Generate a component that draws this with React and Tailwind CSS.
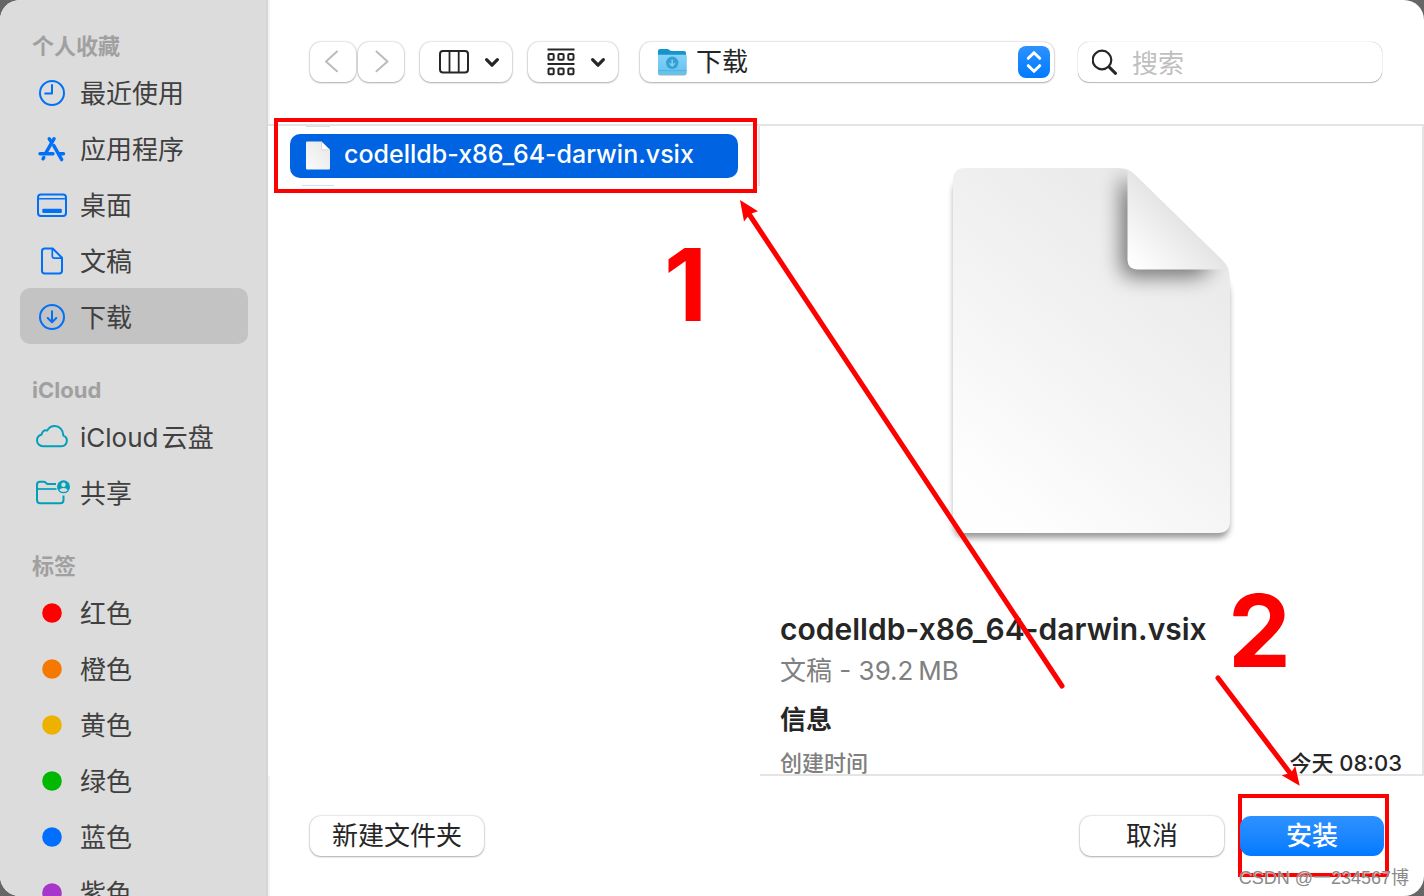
import React from 'react';

const blue = '#0070f8';
const teal = '#00a0b8';

function ClockIcon() {
  return (
    <svg width="32" height="32" viewBox="0 0 32 32" fill="none" stroke={blue} strokeWidth="2">
      <circle cx="16" cy="16" r="12" />
      <path d="M16 8v8.4H9.2" strokeLinecap="round" strokeLinejoin="round" />
    </svg>
  );
}

function AppsIcon() {
  return (
    <svg width="32" height="32" viewBox="0 0 32 32" fill="none" stroke={blue} strokeWidth="3.4" strokeLinecap="round">
      <path d="M18.1 5.7 10 19.6M7.8 24.5l-.8 1.3" />
      <path d="M13.2 5.7l2.4 3.6" />
      <path d="M17.8 12.6l7.9 14" />
      <path d="M4 20.7h13M23.4 20.7H27.500" />
    </svg>
  );
}

function DesktopIcon() {
  return (
    <svg width="32" height="32" viewBox="0 0 32 32" fill="none" stroke={blue} strokeWidth="2">
      <rect x="2" y="5.500" width="28" height="21.500" rx="3" />
      <path d="M2 9.700h28" strokeWidth="1.600" />
      <rect x="6.300" y="19.800" width="19.500" height="4.200" rx="1" fill={blue} stroke="none" />
    </svg>
  );
}

function DocumentIcon() {
  return (
    <svg width="32" height="32" viewBox="0 0 32 32" fill="none" stroke={blue} strokeWidth="2" strokeLinejoin="round">
      <path d="M16.700 3.500H8.700Q6 3.500 6 6.200V25.800Q6 28.500 8.700 28.500H23.300Q26 28.500 26 25.800V12.700Z" />
      <path d="M16.300 3.800V11.100Q16.300 13.200 18.400 13.200H25.800" strokeWidth="1.700" />
    </svg>
  );
}

function DownloadIcon() {
  return (
    <svg width="32" height="32" viewBox="0 0 32 32" fill="none" stroke={blue} strokeWidth="2" strokeLinecap="round" strokeLinejoin="round">
      <circle cx="16" cy="16" r="12" />
      <path d="M16 10.200V21M11.700 17l4.300 4.300 4.300-4.300" />
    </svg>
  );
}

function CloudIcon() {
  return (
    <svg width="36" height="32" viewBox="0 1 36 32" fill="none" stroke={teal} strokeWidth="2" strokeLinejoin="round">
      <path d="M9 26.200H27.500A5.500 5.500 0 0 0 29.400 15.600C29.200 9.800 25.300 6 20.800 6C17.300 6 14.600 7.900 13.200 10.600C10 9.600 7.900 11.800 7.700 14.500C4.700 15.400 3 17.600 3 20.300C3 23.600 5.600 26.200 9 26.200Z" />
    </svg>
  );
}

function SharedFolderIcon() {
  return (
    <svg width="36" height="32" viewBox="0 1 36 32" fill="none" stroke={teal} strokeWidth="2" strokeLinejoin="round">
      <path d="M29.500 19.500V24Q29.500 27.200 26.300 27.200H6.200Q3 27.200 3 24V8.700Q3 5.800 5.900 5.800H9.500Q10.800 5.800 11.800 6.700L12.600 7.400Q13.300 8 14.500 8H22" />
      <path d="M3 13h19.500" strokeWidth="1.700" />
      <circle cx="29.500" cy="10.800" r="6.500" fill={teal} stroke="none" />
      <circle cx="29.500" cy="8.700" r="2.200" fill="#dcdcdc" stroke="none" />
      <path d="M25.300 14.300Q26.200 11.900 29.500 11.900T33.700 14.300Q32.200 16 29.500 16T25.300 14.300Z" fill="#dcdcdc" stroke="none" />
    </svg>
  );
}

function Dot({ color }) {
  return (
    <svg width="32" height="32" viewBox="0 0 32 32">
      <circle cx="16" cy="16" r="9.800" fill={color} />
    </svg>
  );
}

const sections = [
  {
    title: '个人收藏',
    items: [
      { label: '最近使用', icon: <ClockIcon /> },
      { label: '应用程序', icon: <AppsIcon /> },
      { label: '桌面', icon: <DesktopIcon /> },
      { label: '文稿', icon: <DocumentIcon /> },
      { label: '下载', icon: <DownloadIcon />, selected: true },
    ],
  },
  {
    title: 'iCloud',
    items: [
      { label: 'iCloud云盘', icon: <CloudIcon /> },
      { label: '共享', icon: <SharedFolderIcon /> },
    ],
  },
  {
    title: '标签',
    items: [
      { label: '红色', icon: <Dot color="#ff0000" /> },
      { label: '橙色', icon: <Dot color="#f57900" /> },
      { label: '黄色', icon: <Dot color="#edb200" /> },
      { label: '绿色', icon: <Dot color="#00b800" /> },
      { label: '蓝色', icon: <Dot color="#006fff" /> },
      { label: '紫色', icon: <Dot color="#a737cb" /> },
    ],
  },
];

function Sidebar() {
  return (
    <nav className="h-full w-[268px] shrink-0 overflow-hidden border-r-2 border-[#d6d6d6] bg-[#dcdcdc] pr-[18px] pl-5">
      {sections.map((section) => (
        <section key={section.title} className="pt-7">
          <h2 className="flex h-9 items-center pl-3 text-[22px] leading-9 font-bold text-[#a0a0a0]">{section.title}</h2>
          <ul>
            {section.items.map((item) => (
              <li key={item.label}>
                <button
                  type="button"
                  className={
                    item.selected
                      ? 'flex h-14 w-full items-center gap-2 rounded-[10px] bg-[#c3c3c3] pt-0.5 pl-3 text-[26px] whitespace-nowrap text-[#404040] [text-autospace:normal]'
                      : 'flex h-14 w-full items-center gap-2 rounded-[10px] pt-0.5 pl-3 text-[26px] whitespace-nowrap text-[#404040] [text-autospace:normal]'
                  }
                >
                  <span className="flex w-10 justify-center">{item.icon}</span>
                  <span>{item.label}</span>
                </button>
              </li>
            ))}
          </ul>
        </section>
      ))}
    </nav>
  );
}

const raised = 'rounded-[11px] bg-white shadow-[0_0_2px_rgba(0,0,0,0.3),0_1px_2px_rgba(0,0,0,0.25)]';

function Chevron() {
  return (
    <svg width="16" height="12" viewBox="0 0 16 12" fill="none" stroke="#262626" strokeWidth="3.200" strokeLinecap="round" strokeLinejoin="round">
      <path d="M2.600 3.700 8 9.200l5.400-5.500" />
    </svg>
  );
}

function FolderIcon() {
  return (
    <svg width="32" height="32" viewBox="0 0 32 32">
      <defs>
        <linearGradient id="folder" x1="0" y1="0" x2="0" y2="1">
          <stop offset="0" stopColor="#84d3fb" />
          <stop offset="1" stopColor="#62c1ed" />
        </linearGradient>
      </defs>
      <path d="M2 5q0-2 2-2h7q1.500 0 2.500 1t2.500 1h12q2 0 2 2v5H2Z" fill="#1595cb" />
      <path d="M2 9.500h28.500V27.500q0 2-2 2H4q-2 0-2-2Z" fill="#94b5c6" />
      <path d="M2 8.800h28.500V26.600q0 2-2 2H4q-2 0-2-2Z" fill="url(#folder)" />
      <path d="M2 24.700h28.500" stroke="#52afd8" strokeWidth="1" />
      <circle cx="16.200" cy="16.800" r="6.200" fill="#369fd3" />
      <path d="M16.200 13.400v6M13.500 17.200l2.700 2.700 2.700-2.700" stroke="#81cff5" strokeWidth="1.500" fill="none" />
    </svg>
  );
}

function Toolbar() {
  return (
    <header className="flex h-[124px] shrink-0 items-center border-l-2 border-[#f4f4f4] pr-[42px] pl-10">
      <div className="flex gap-0.5">
        <button type="button" aria-label="后退" className={`${raised} flex h-10 w-[46px] items-center justify-center`}>
          <svg width="16" height="24" viewBox="0 0 16 24" fill="none" stroke="#bcbcbc" strokeWidth="2" strokeLinecap="round" strokeLinejoin="round">
            <path d="M12 1.500 1 11.500l11 9.800" />
          </svg>
        </button>
        <button type="button" aria-label="前进" className={`${raised} flex h-10 w-[46px] items-center justify-center`}>
          <svg width="16" height="24" viewBox="0 0 16 24" fill="none" stroke="#bcbcbc" strokeWidth="2" strokeLinecap="round" strokeLinejoin="round">
            <path d="M3.500 1.500 14.500 11.500 3.500 21.300" />
          </svg>
        </button>
      </div>
      <button type="button" aria-label="分栏显示" className={`${raised} ml-4 flex h-10 w-[92px] items-center justify-center gap-[15px] pl-1.5`}>
        <svg width="30" height="24" viewBox="0 0 30 24" fill="none" stroke="#262626" strokeWidth="2">
          <rect x="1" y="1" width="28" height="21.500" rx="3" />
          <path d="M10.500 1v21.500M19.700 1v21.500" strokeWidth="1.800" />
        </svg>
        <Chevron />
      </button>
      <button type="button" aria-label="分组方式" className={`${raised} ml-4 flex h-10 w-[90px] items-center justify-center gap-[15px] pl-1.5`}>
        <svg width="28" height="28" viewBox="0 0 28 28" fill="none" stroke="#262626" strokeWidth="2">
          <path d="M.5 1.500h27M.5 16h27" strokeWidth="1.800" />
          <rect x="1.500" y="6" width="5.200" height="5.800" rx="1" />
          <rect x="11.400" y="6" width="5.200" height="5.800" rx="1" />
          <rect x="21.300" y="6" width="5.200" height="5.800" rx="1" />
          <rect x="1.500" y="20.500" width="5.200" height="5.800" rx="1" />
          <rect x="11.400" y="20.500" width="5.200" height="5.800" rx="1" />
          <rect x="21.300" y="20.500" width="5.200" height="5.800" rx="1" />
        </svg>
        <Chevron />
      </button>
      <div className={`${raised} relative ml-[22px] h-10 min-w-0 flex-1`}>
        <select aria-label="位置" className="h-10 w-full appearance-none rounded-[11px] bg-transparent pl-14 text-[26px] leading-10 text-[#262626]">
          <option>下载</option>
        </select>
        <span className="pointer-events-none absolute top-1 left-4">
          <FolderIcon />
        </span>
        <span className="pointer-events-none absolute top-1 right-1">
          <svg width="32" height="32" viewBox="0 0 32 32" fill="none">
            <defs>
              <linearGradient id="stepper" x1="0" y1="0" x2="0" y2="1">
                <stop offset="0" stopColor="#2d92ff" />
                <stop offset="1" stopColor="#007aff" />
              </linearGradient>
            </defs>
            <rect width="32" height="32" rx="8" fill="url(#stepper)" />
            <path d="M10.300 12.300 16 6.700l5.700 5.600M10.300 19.700 16 25.300l5.700-5.600" stroke="#fff" strokeWidth="3" strokeLinecap="round" strokeLinejoin="round" />
          </svg>
        </span>
      </div>
      <label className="ml-6 flex h-10 w-[304px] items-center gap-[14px] rounded-[11px] bg-white pl-[14px] shadow-[0_0_1px_rgba(0,0,0,0.4),0_1px_1px_rgba(0,0,0,0.25)]">
        <svg className="shrink-0" width="26" height="26" viewBox="0 0 26 26" fill="none" stroke="#262626" strokeLinecap="round">
          <circle cx="10" cy="11" r="9.300" strokeWidth="2.200" />
          <path d="M17.200 18.200 23.500 24.300" strokeWidth="3" />
        </svg>
        <input type="search" aria-label="搜索" placeholder="搜索" className="h-10 w-full min-w-0 bg-transparent pt-0.5 text-[26px] text-[#262626] outline-none placeholder:text-[#bfbfbf]" />
      </label>
    </header>
  );
}

function FilePreview() {
  return (
    <svg width="301" height="389" viewBox="-12 -8 301 389">
      <defs>
        <linearGradient id="paper" gradientUnits="userSpaceOnUse" x1="40" y1="340" x2="240" y2="100">
          <stop offset="0" stopColor="#fefefe" />
          <stop offset="0.500" stopColor="#f4f4f4" />
          <stop offset="1" stopColor="#ebebeb" />
        </linearGradient>
        <linearGradient id="fold" gradientUnits="userSpaceOnUse" x1="180" y1="98" x2="228" y2="50">
          <stop offset="0" stopColor="#ffffff" />
          <stop offset="1" stopColor="#e4e4e4" />
        </linearGradient>
        <clipPath id="page">
          <path d="M12 0H166Q175 0 181 6L269 92Q277 99 277 112V353Q277 365 265 365H12Q0 365 0 353V12Q0 0 12 0Z" />
        </clipPath>
        <filter id="foldShadow" x="-40%" y="-40%" width="180%" height="180%">
          <feGaussianBlur stdDeviation="10" />
        </filter>
        <filter id="pageShadow" x="-10%" y="-10%" width="120%" height="120%">
          <feGaussianBlur stdDeviation="3" />
        </filter>
      </defs>
      <path d="M14 12H160Q170 12 180 22L267 108Q276 115 276 128V358Q276 370 264 370H13Q1 370 1 358V24Q1 12 14 12Z" fill="#000" opacity="0.400" filter="url(#pageShadow)" />
      <g clipPath="url(#page)">
        <rect width="277" height="365" fill="url(#paper)" />
        <path d="M168 6V96Q168 109 180 109H244L262 96Z" fill="#000" opacity="0.500" filter="url(#foldShadow)" />
        <path d="M174.500 -2V91Q174.500 101.500 185 101.500H280Z" fill="url(#fold)" />
      </g>
    </svg>
  );
}

function Browser() {
  return (
    <div className="flex min-h-0 flex-1 border-t-2 border-[#e4e4e4]">
      <div className="relative w-[490px] shrink-0 pr-5 pl-[22px]">
        <div className="ml-4 h-px w-6 bg-[#dcdcdc]" />
        <ul aria-label="文件" className="py-[7px]">
          <li>
            <button type="button" className="flex h-11 w-full items-center gap-3 rounded-[10px] bg-[#0063e1] pl-[15px] text-[25px] font-medium text-white">
              <svg width="27" height="30" viewBox="0 0 27 30">
                <defs>
                  <linearGradient id="smallPaper" x1="0" y1="1" x2="1" y2="0">
                    <stop offset="0" stopColor="#fbfbfb" />
                    <stop offset="1" stopColor="#e6e6e6" />
                  </linearGradient>
                </defs>
                <path d="M2 .5H16.500L25 9V27.500Q25 28.500 24 28.500H2Q1 28.500 1 27.500V1.500Q1 .5 2 .5Z" fill="url(#smallPaper)" />
                <path d="M16.500 .8V7.500Q16.500 8.800 17.800 8.800H25Z" fill="#fff" stroke="#c4c4c4" strokeWidth="0.600" />
              </svg>
              <span className="pb-0.5">codelldb-x86_64-darwin.vsix</span>
            </button>
          </li>
        </ul>
        <div className="ml-3 h-px w-8 bg-[#c9e4f3]" />
        <div className="pointer-events-none absolute -top-2 right-[1px] left-[6px] h-[75px] border-4 border-[#ff0000]" />
      </div>
      <div className="h-15 w-0.5 shrink-0 bg-[#e4e4e4]" />
      <section className="flex min-w-0 flex-1 flex-col overflow-hidden border-r-2 border-b-2 border-[#e4e4e4] px-5">
        <div className="flex shrink-0 justify-center pt-[34px]">
          <FilePreview />
        </div>
        <h1 className="mt-[60px] shrink-0 text-[30px] leading-10 font-semibold text-[#262626]">codelldb-x86_64-darwin.vsix</h1>
        <p className="shrink-0 text-[26px] leading-[44px] text-[#808080]">文稿 - 39.2{'\u2009'}MB</p>
        <h2 className="mt-1 shrink-0 text-[26px] leading-[46px] font-bold text-[#262626]">信息</h2>
        <dl className="flex shrink-0 justify-between text-[22px] leading-10 font-medium">
          <dt className="text-[#808080]">创建时间</dt>
          <dd className="text-[#262626]">今天 08:03</dd>
        </dl>
      </section>
    </div>
  );
}

function Footer() {
  return (
    <footer className="flex h-[120px] shrink-0 items-center justify-between border-l-2 border-[#f4f4f4] pr-10 pl-10 text-[26px] text-[#262626]">
      <button type="button" className={`${raised} h-10 w-[174px] leading-10`}>新建文件夹</button>
      <div className="flex gap-4">
        <button type="button" className={`${raised} h-10 w-36 leading-10`}>取消</button>
        <div className="relative">
          <div className="pointer-events-none absolute -top-[22px] -right-[5px] -bottom-[21px] -left-[2px] border-4 border-[#ff0000]" />
          <button type="button" className="relative h-10 w-36 rounded-[11px] bg-linear-to-b from-[#2d92ff] to-[#007aff] leading-10 font-medium text-white">安装</button>
        </div>
      </div>
    </footer>
  );
}

function Annotations() {
  return (
    <div className="pointer-events-none absolute inset-0 text-[100px] leading-[100px] font-bold text-[#ff0000]">
      <svg className="absolute top-0 left-0" width="1424" height="896" viewBox="0 0 1424 896" fill="#ff0000" stroke="#ff0000">
        <path d="M1062 686 749 214M1218 678l72 95" strokeWidth="5" strokeLinecap="round" />
        <path d="M740 200 758 211.300 750 214 744 221.500Z" stroke="none" />
        <path d="M1299.700 785.700 1281.700 775.300 1291 773 1295.300 766Z" stroke="none" />
      </svg>
      <span className="absolute top-[235px] left-[664px]">1</span>
      <span className="absolute top-[581px] left-[1228px]">2</span>
    </div>
  );
}

export default function App() {
  return (
    <div className="h-screen overflow-hidden bg-[#666666] font-['Inter','Noto_Sans_CJK_SC',sans-serif]">
      <div className="relative flex h-full overflow-hidden rounded-[20px] bg-white">
        <Sidebar />
        <main className="flex min-w-0 flex-1 flex-col">
          <Toolbar />
          <Browser />
          <Footer />
        </main>
        <Annotations />
        <p className="absolute right-[15px] bottom-[6px] font-['Liberation_Sans','Noto_Sans_CJK_SC',sans-serif] text-[18px] leading-6 text-[#8a8a8a] [text-shadow:1px_1px_0_#ffffffb0]">CSDN @一234567博</p>
      </div>
    </div>
  );
}
